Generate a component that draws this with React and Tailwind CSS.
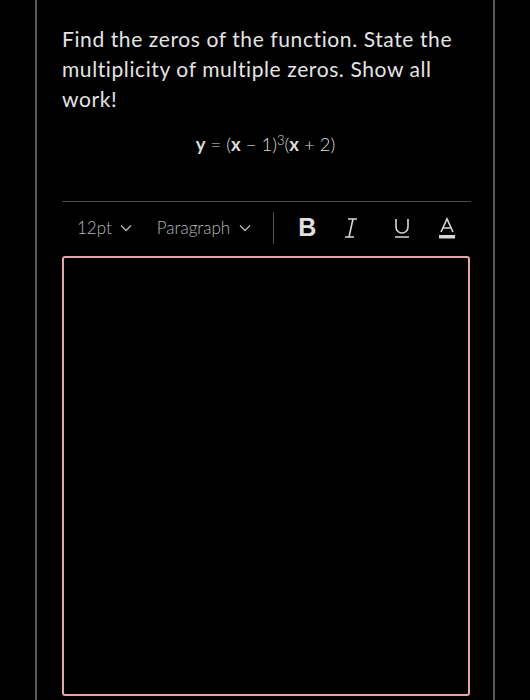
export default function App() {
  return (
    <div className="min-h-[700px] w-[530px] overflow-hidden bg-black font-['Lato','Liberation_Sans',sans-serif]">
      <div className="ml-[35px] h-[700px] w-[460px] border-x-2 border-[#5a5a5a] pl-[25px] pr-[24px] pt-[24px]">
        <p className="text-[21px] leading-[30px] tracking-[0.6px] text-[#e4e4e4]">
          Find the zeros of the function. State the multiplicity of multiple zeros. Show all work!
        </p>
        <div className="mt-[17px] text-center text-[18.5px] font-light text-[#dcdcdc]">
          <span className="font-bold">y</span> = (<span className="font-bold">x</span> − 1)
          <sup className="text-[13px]">3</sup>(<span className="font-bold">x</span> + 2)
        </div>
        <div className="mt-[42px] h-px w-[409px] bg-[#4a4a4a]" />
        <div className="mt-[10px] flex h-[32px] w-[409px] items-center text-[17px] text-[#b8b8b8]">
          <div className="ml-[15px] flex items-center gap-[8px] font-light">
            12pt
            <svg width="12" height="8" viewBox="0 0 12 8" fill="none" stroke="currentColor" strokeWidth="1.3">
              <path d="M1 1.5l5 5 5-5" />
            </svg>
          </div>
          <div className="ml-[25px] flex items-center gap-[9px] font-light">
            Paragraph
            <svg width="12" height="8" viewBox="0 0 12 8" fill="none" stroke="currentColor" strokeWidth="1.3">
              <path d="M1 1.5l5 5 5-5" />
            </svg>
          </div>
          <div className="ml-[22px] h-[32px] w-px bg-[#555]" />
          <span className="ml-[24px] text-[25px] font-bold text-[#e0e0e0] font-['Liberation_Sans',sans-serif]">B</span>
          <svg className="ml-[26px]" width="18" height="22" viewBox="0 0 18 22" fill="none" stroke="#d8d8d8" strokeWidth="1.6">
            <path d="M6 2h9M3 20h9M11 2L7 20" />
          </svg>
          <svg className="ml-[34px]" width="16" height="22" viewBox="0 0 16 22" fill="none" stroke="#d8d8d8" strokeWidth="1.6">
            <path d="M2 2v8a6 6 0 0 0 12 0V2M1 20h14" />
          </svg>
          <svg className="ml-[28px]" width="18" height="22" viewBox="0 0 18 22" fill="none" stroke="#d8d8d8" strokeWidth="1.6">
            <path d="M3 15L9 2l6 13M5 11h8" />
            <rect x="1" y="18" width="16" height="3.5" fill="#d8d8d8" stroke="none" />
          </svg>
        </div>
        <div className="mt-[12px] h-[440px] w-[408px] rounded-[3px] border-2 border-[#e8a2ab]" />
      </div>
    </div>
  );
}
